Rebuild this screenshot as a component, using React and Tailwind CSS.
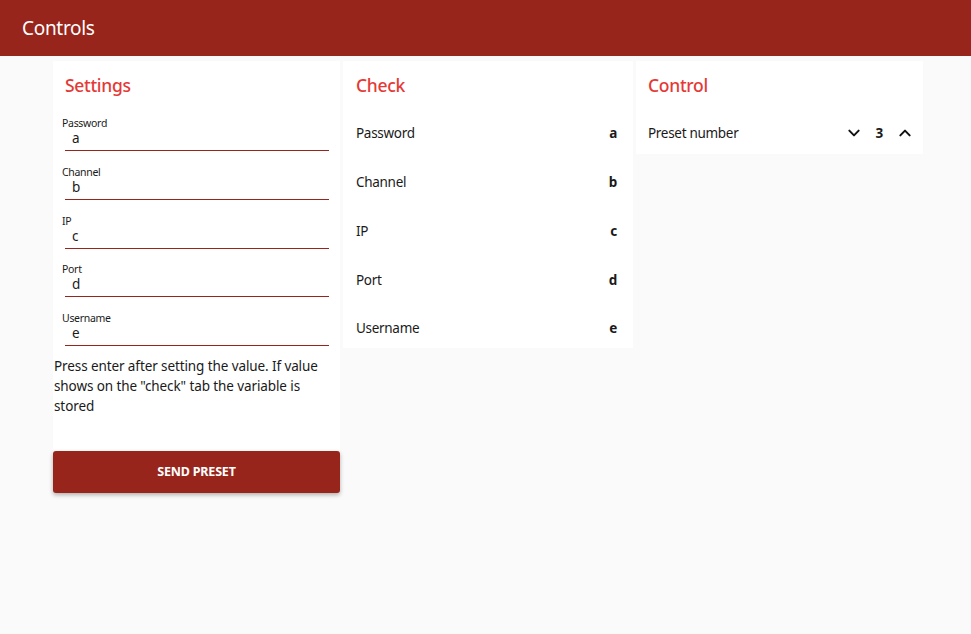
import React from 'react'

const font = { fontFamily: '"Noto Sans", "Open Sans", sans-serif' }

const fields = [
  { label: 'Password', value: 'a' },
  { label: 'Channel', value: 'b' },
  { label: 'IP', value: 'c' },
  { label: 'Port', value: 'd' },
  { label: 'Username', value: 'e' },
]

function Chevron({ up }) {
  return (
    <svg width="16" height="16" viewBox="0 0 24 24" fill="none" stroke="#111" strokeWidth="3" strokeLinecap="round" strokeLinejoin="round">
      {up ? <path d="M5 15.5l7-7 7 7" /> : <path d="M5 8.5l7 7 7-7" />}
    </svg>
  )
}

export default function App() {
  return (
    <div className="min-h-[634px] bg-[#fafafa] text-[#1a1a1a]" style={font}>
      <header className="h-14 bg-[#98251b] flex items-center px-[22px]">
        <h1 className="text-white text-[19px] tracking-[-0.3px]">Controls</h1>
      </header>

      <div className="flex items-start gap-[3px] pl-[53px] pt-[5px]">
        <div className="w-[287px] flex flex-col">
          <div className="bg-white h-[390px]">
            <h2 className="text-[#e53935] text-[17.5px] font-medium pl-3 pt-3 leading-6 tracking-[-0.3px]">Settings</h2>
            <div className="pt-[19px]">
              {fields.map(f => (
                <div key={f.label} className="pl-[9px] pr-[11px] h-[48.75px]">
                  <div className="text-[10.5px] leading-[13px] tracking-[-0.3px] pt-[1px]">{f.label}</div>
                  <div className="ml-[3px] border-b border-[#98251b] pl-[7px] text-[13.5px] leading-[17px] pb-[3px]">{f.value}</div>
                </div>
              ))}
            </div>
            <p className="text-[13.5px] leading-5 pl-[1px] pr-4 -mt-[4px] tracking-[-0.1px]">
              Press enter after setting the value. If value shows on the "check" tab the variable is stored
            </p>
          </div>
          <button className="h-[42px] w-full bg-[#98251b] text-white text-[12.5px] font-bold rounded-[3px] shadow-[0_2px_4px_rgba(0,0,0,0.3)] tracking-[-0.2px]">
            SEND PRESET
          </button>
        </div>

        <div className="w-[290px] h-[287px] bg-white overflow-hidden">
          <h2 className="text-[#e53935] text-[17.5px] font-medium pl-[13px] pt-3 leading-6 tracking-[-0.3px]">Check</h2>
          <div className="pt-[12px]">
            {fields.map(f => (
              <div key={f.label} className="h-[48.8px] flex items-center justify-between pl-[13px] pr-[16px] text-[13.5px] tracking-[-0.3px]">
                <span>{f.label}</span>
                <span className="font-bold">{f.value}</span>
              </div>
            ))}
          </div>
        </div>

        <div className="w-[287px] h-[93px] bg-white overflow-hidden">
          <h2 className="text-[#e53935] text-[17.5px] font-medium pl-3 pt-3 leading-6 tracking-[-0.3px]">Control</h2>
          <div className="pt-[12px] h-[60px] flex items-center justify-between pl-3 pr-[10px] text-[13.5px] tracking-[-0.3px]">
            <span>Preset number</span>
            <div className="flex items-center gap-[14px]">
              <Chevron />
              <span className="font-bold">3</span>
              <Chevron up />
            </div>
          </div>
        </div>
      </div>
    </div>
  )
}
